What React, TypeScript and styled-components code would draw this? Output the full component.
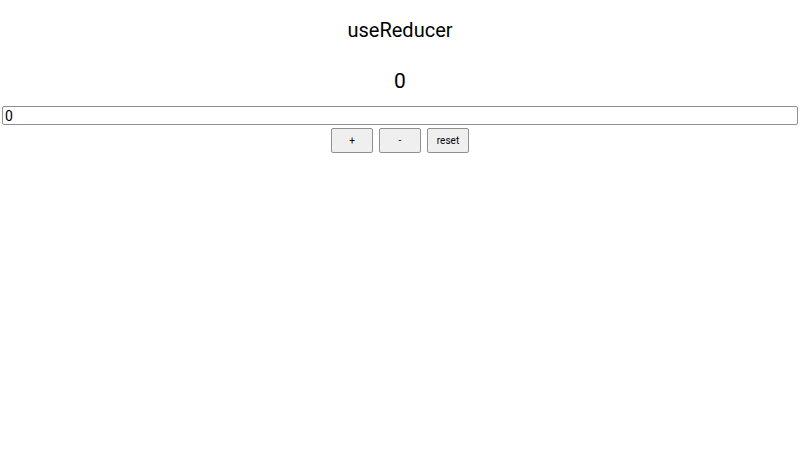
import React, { useReducer } from "react";
import styled, { createGlobalStyle } from "styled-components";

const Global = createGlobalStyle`
  body {
    margin: 0;
    background: #ffffff;
    font-family: Roboto, "Noto Sans", sans-serif;
    color: #000;
  }
`;

const Page = styled.div`
  display: flex;
  flex-direction: column;
  align-items: center;
  padding-top: 18px;
`;

const Title = styled.h1`
  margin: 0;
  font-size: 20px;
  font-weight: 400;
  line-height: 24px;
  text-align: center;
  color: #000;
`;

const Count = styled.h2`
  margin: 27px 0 0;
  font-size: 21px;
  font-weight: 400;
  line-height: 24px;
  text-align: center;
  color: #000;
`;

const Field = styled.input`
  box-sizing: border-box;
  margin: 13px 2px 0;
  width: calc(100% - 4px);
  height: 19px;
  padding: 0 2px;
  border: 1px solid #8f8f8f;
  border-radius: 2px;
  font-family: Roboto, "Noto Sans", sans-serif;
  font-size: 14px;
  color: #000;
  outline: none;
`;

const Controls = styled.div`
  display: flex;
  gap: 6px;
  margin-top: 3px;
`;

const Button = styled.button`
  box-sizing: border-box;
  width: 42px;
  height: 25px;
  padding: 0;
  border: 1px solid #8f8f8f;
  border-radius: 2px;
  background: #efefef;
  font-family: Roboto, "Noto Sans", sans-serif;
  font-size: 10px;
  color: #000;
  cursor: pointer;
`;

type Action = { type: "inc" } | { type: "dec" } | { type: "reset" };

function reducer(state: number, action: Action): number {
  switch (action.type) {
    case "inc":
      return state + 1;
    case "dec":
      return state - 1;
    case "reset":
      return 0;
  }
}

export default function App() {
  const [count, dispatch] = useReducer(reducer, 0);
  return (
    <>
      <Global />
      <Page>
        <Title>useReducer</Title>
        <Count>{count}</Count>
        <Field value={count} readOnly />
        <Controls>
          <Button onClick={() => dispatch({ type: "inc" })}>+</Button>
          <Button onClick={() => dispatch({ type: "dec" })}>-</Button>
          <Button onClick={() => dispatch({ type: "reset" })}>reset</Button>
        </Controls>
      </Page>
    </>
  );
}
